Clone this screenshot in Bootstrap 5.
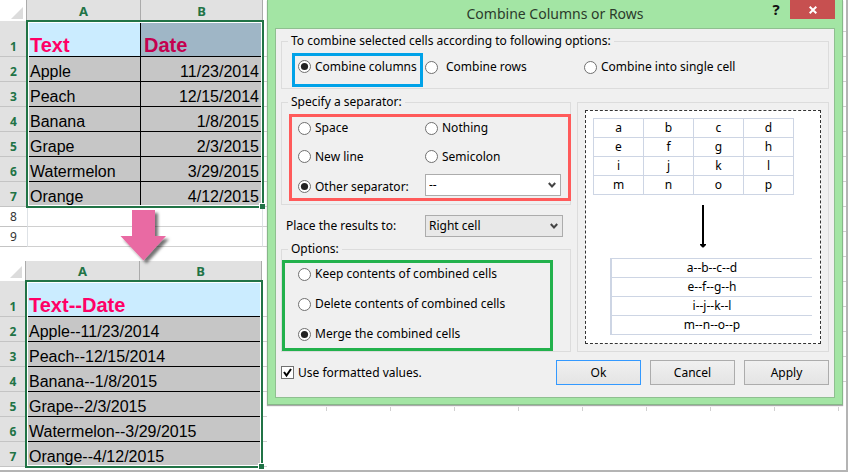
<!DOCTYPE html>
<html lang="en">
<head>
<meta charset="utf-8">
<meta name="viewport" content="width=device-width, initial-scale=1">
<title>Combine Columns or Rows</title>
<link href="https://cdn.jsdelivr.net/npm/bootstrap@5.3.0/dist/css/bootstrap.min.css" rel="stylesheet">
<style>
  :root { --xl-green: #217346; --line: #dcdcdc; }
  body { font-family: "Noto Sans", sans-serif; font-size: 12px; line-height: 16px; color: #000; background: #fff; }
  .workspace { min-height: 100vh; border-right: 2px solid #b4b4b4; border-bottom: 2px solid #b4b4b4; }
  .sheets { flex: 0 0 267px; }

  /* Spreadsheets */
  .sheet-grid { width: 100%; table-layout: fixed; border-collapse: separate; border-spacing: 0; }
  .sheet-grid th, .sheet-grid td { height: 25px; padding: 0 4px 0 3px; border: 0 solid #000; border-width: 0 0 1px; vertical-align: bottom; white-space: nowrap; font: 16px/18px "Liberation Sans", Arial, sans-serif; }
  .sheet-grid tr > th:first-child { background: #e1e1e1; border-color: #c4c4c4; color: var(--xl-green); font: bold 12px/18px "Noto Sans", sans-serif; text-align: center; padding: 0; }
  .sheet-grid thead th, .sheet-grid thead tr > th:first-child { height: 20px; background: #e1e1e1; border-width: 0 1px 0 0; border-color: #ababab; color: var(--xl-green); font: bold 13px/20px "Noto Sans", sans-serif; text-align: center; vertical-align: middle; padding: 0; }
  .sheet-grid thead tr > th:first-child { background: #fff; }
  .sheet-grid thead .edge { background: #fff; border-width: 0; }
  .sheet-grid .filled td { background: #c6c6c6; }
  .sheet-grid td.split { border-right-width: 1px; }
  .sheet-grid .titles td { height: 36px; background: #cbecff; color: #ff0066; font-weight: bold; font-size: 20px; line-height: 22px; }
  .sheet-grid .titles td.dimmed { background: #9fb6c6; color: #c4004f; }
  .sheet-grid tbody td.edge { background: #fff; border-color: #d0d0d0; }
  .sheet-grid .blank td { height: 20px; border-color: #d0d0d0; }
  .sheet-grid .blank > th:first-child { height: 20px; background: #fff; color: #333; font-weight: normal; }
  .first-sheet { padding-bottom: 4px; margin-bottom: 10px; }
  .first-sheet thead th, .first-sheet thead tr > th:first-child { height: 21px; }
  .selection { inset: 20px 3px 43px 26px; border: 2px solid var(--xl-green); box-shadow: inset 0 0 0 1px #fff; pointer-events: none; }
  .second-sheet .selection { inset: 19px 4px -1px 25px; }
  .selection::after { content: ""; position: absolute; right: -3px; bottom: -3px; width: 6px; height: 6px; background: var(--xl-green); border: 1px solid #fff; border-width: 1px 0 0 1px; }
  .flow-arrow { left: 118px; top: 207px; width: 60px; height: 60px; z-index: 2; }

  /* Dialog */
  .backdrop-grid { padding-right: 3px; background: repeating-linear-gradient(#fff 0 24px, #d0d0d0 24px 25px) right 0 top 7px / 3px 396px no-repeat, repeating-linear-gradient(90deg, #fff 0 59px, #d0d0d0 59px 60px, #fff 60px 64px) left 0 top 407px / 100% 4px no-repeat; }
  .dlg { background: #a3e5a4; border: 1px solid #86b788; border-top: 0; padding: 0 7px 6px; box-shadow: 0 1px 1px #aaa; }
  .dlg-title { height: 28px; font-size: 14px; line-height: 27px; color: #2b3b2b; }
  .dlg-tools { top: 0; right: 7px; }
  .help-btn { width: 28px; height: 18px; background: none; font: bold 15px/18px "Noto Sans", sans-serif; color: #111; }
  .close-btn { width: 45px; height: 19px; background: #c75050; }
  .dlg-body { background: #f0f0f0; border: 1px solid #8fbf90; padding: 5px 5px 12px; }
  .group { border: 1px solid var(--line); min-width: 0; }
  .group > legend { float: none; width: auto; margin: 0 0 0 6px; padding: 0 3px; font-size: 12px; line-height: 14px; }
  .choice { display: flex; align-items: center; gap: 4px; white-space: nowrap; }
  .choice .form-check-input { width: 13px; height: 13px; margin: 0; border: 1px solid #707070; background-color: #fff; flex: none; }
  .choice .form-check-input[type=radio]:checked { background-image: url("data:image/svg+xml,%3Csvg xmlns='http://www.w3.org/2000/svg' viewBox='0 0 11 11'%3E%3Ccircle cx='5.5' cy='5.5' r='3.6' fill='%23222'/%3E%3C/svg%3E"); }
  .choice .form-check-input[type=checkbox] { border-radius: 0; }
  .choice .form-check-input[type=checkbox]:checked { background-image: url("data:image/svg+xml,%3Csvg xmlns='http://www.w3.org/2000/svg' viewBox='0 0 11 11'%3E%3Cpath d='M2 5l2.5 3.5L9 2' fill='none' stroke='%23000' stroke-width='2'/%3E%3C/svg%3E"); }
  .top-choices { display: grid; grid-template-columns: 131px 157px auto; column-gap: 2px; padding: 5px 0 1px 10px; }
  .mark-blue { border: 3px solid #00a2e8; height: 34px; padding: 0 3px 7px; }
  .top-choices > .choice { height: 28px; }
  .wide-gap { gap: 8px; }
  .middle { display: grid; grid-template-columns: 290px minmax(0, 1fr); gap: 6px; margin-top: 6px; }
  .mark-red { border: 3px solid #ff5a5a; margin: 5px -1px 3px 7px; padding: 0 7px 0 6px; display: grid; grid-template-columns: 127px minmax(0, 1fr); grid-template-rows: 22px 35px 25px; height: 87px; align-items: center; }
  .mark-green { border: 3px solid #22b14c; margin: 4px 17px 0 0; padding: 0 0 0 13px; height: 91px; display: grid; grid-template-rows: 22px 38px 22px; align-items: center; }
  .drop { height: 22px; border: 1px solid #acacac; border-radius: 0; padding: 0 20px 0 3px; font-size: 12px; line-height: 18px; color: #000; background-color: #fff; background-position: right 4px center; background-size: 8px 8px; background-image: url("data:image/svg+xml,%3Csvg xmlns='http://www.w3.org/2000/svg' viewBox='0 0 8 8'%3E%3Cpath d='M.8 2L4 5.5 7.2 2' fill='none' stroke='%23444' stroke-width='2'/%3E%3C/svg%3E"); }
  .mark-red .drop { align-self: start; }
  .drop-shaded { background-color: #e8e8e8; }
  .place-row { display: grid; grid-template-columns: 139px 138px; padding: 10px 0 5px 5px; align-items: center; }
  .preview-frame { margin-top: 7px; padding: 7px; }
  .preview { background: #fff; border: 1px dashed #333; padding: 7px 8px 8px 7px; height: 100%; }
  .sample { table-layout: fixed; border-collapse: collapse; }
  .sample td { height: 19px; padding: 0 0 1px; border: 1px solid #cdd5e4; text-align: center; line-height: 16px; }
  .before { width: 201px; }
  .joined { width: 202px; margin-left: auto; }
  .joined td { border-right: 0; border-left-width: 2px; }
  .push-btn { width: 85px; height: 25px; border: 1px solid #acacac; border-radius: 0; padding: 0; font-size: 12px; line-height: 20px; color: #000; background: linear-gradient(#f0f0f0, #e4e4e4); }
  .push-btn.main { border-color: #3399ff; }
  .button-row { gap: 9px; }
</style>
<script src="https://cdn.jsdelivr.net/npm/bootstrap@5.3.0/dist/js/bootstrap.bundle.min.js"></script>
</head>
<body>
<main class="workspace d-flex">
  <section class="sheets position-relative">
    <div class="first-sheet position-relative">
      <table class="sheet-grid">
        <colgroup><col style="width:27px"><col style="width:114px"><col><col style="width:4px"></colgroup>
        <thead><tr><th><svg width="24" height="18" class="d-block" aria-hidden="true"><path d="M23 5v12H11z" fill="#dcdcdc"/></svg></th><th>A</th><th>B</th><th class="edge"></th></tr></thead>
        <tbody>
          <tr class="filled titles"><th>1</th><td class="split">Text</td><td class="dimmed">Date</td><td class="edge"></td></tr>
          <tr class="filled"><th>2</th><td class="split">Apple</td><td class="text-end">11/23/2014</td><td class="edge"></td></tr>
          <tr class="filled"><th>3</th><td class="split">Peach</td><td class="text-end">12/15/2014</td><td class="edge"></td></tr>
          <tr class="filled"><th>4</th><td class="split">Banana</td><td class="text-end">1/8/2015</td><td class="edge"></td></tr>
          <tr class="filled"><th>5</th><td class="split">Grape</td><td class="text-end">2/3/2015</td><td class="edge"></td></tr>
          <tr class="filled"><th>6</th><td class="split">Watermelon</td><td class="text-end">3/29/2015</td><td class="edge"></td></tr>
          <tr class="filled"><th>7</th><td class="split">Orange</td><td class="text-end">4/12/2015</td><td class="edge"></td></tr>
          <tr class="blank"><th>8</th><td class="border-start"></td><td class="border-end"></td><td></td></tr>
          <tr class="blank"><th>9</th><td class="border-start"></td><td class="border-end"></td><td></td></tr>
        </tbody>
      </table>
      <div class="selection position-absolute"></div>
    </div>
    <div class="second-sheet position-relative">
      <table class="sheet-grid">
        <colgroup><col style="width:26px"><col style="width:114px"><col><col style="width:5px"></colgroup>
        <thead><tr><th><svg width="24" height="18" class="d-block" aria-hidden="true"><path d="M22 4v12H10z" fill="#dcdcdc"/></svg></th><th>A</th><th>B</th><th class="edge"></th></tr></thead>
        <tbody>
          <tr class="filled titles"><th>1</th><td colspan="2">Text--Date</td><td class="edge"></td></tr>
          <tr class="filled"><th>2</th><td colspan="2">Apple--11/23/2014</td><td class="edge"></td></tr>
          <tr class="filled"><th>3</th><td colspan="2">Peach--12/15/2014</td><td class="edge"></td></tr>
          <tr class="filled"><th>4</th><td colspan="2">Banana--1/8/2015</td><td class="edge"></td></tr>
          <tr class="filled"><th>5</th><td colspan="2">Grape--2/3/2015</td><td class="edge"></td></tr>
          <tr class="filled"><th>6</th><td colspan="2">Watermelon--3/29/2015</td><td class="edge"></td></tr>
          <tr class="filled"><th>7</th><td colspan="2">Orange--4/12/2015</td><td class="edge"></td></tr>
        </tbody>
      </table>
      <div class="selection position-absolute"></div>
    </div>
    <svg class="flow-arrow position-absolute" viewBox="0 0 60 60" aria-hidden="true">
      <defs><filter id="soft" x="-20%" y="-20%" width="150%" height="150%"><feDropShadow dx="3" dy="3" stdDeviation="1.5" flood-color="#000" flood-opacity=".55"/></filter></defs>
      <path d="M14 3h23v26h11L25.500 53.500 2.500 29H14z" fill="#e96aa3" filter="url(#soft)"/>
    </svg>
  </section>

  <section class="backdrop-grid flex-grow-1">
    <form class="dlg position-relative" onsubmit="return false">
      <h1 class="dlg-title text-center fw-normal m-0">Combine Columns or Rows</h1>
      <div class="dlg-tools position-absolute d-flex">
        <button type="button" class="help-btn border-0 p-0" aria-label="Help">?</button>
        <button type="button" class="close-btn border-0 p-0 d-flex align-items-center justify-content-center" aria-label="Close"><svg width="8" height="8" viewBox="0 0 8 8"><path d="M.7.7l6.600 6.600M7.300.7L.7 7.300" stroke="#fff" stroke-width="2"/></svg></button>
      </div>
      <div class="dlg-body">
        <fieldset class="group">
          <legend>To combine selected cells according to following options:</legend>
          <div class="top-choices">
            <div class="mark-blue d-flex align-items-center">
              <label class="choice"><input class="form-check-input" type="radio" name="mode" checked>Combine columns</label>
            </div>
            <label class="choice wide-gap"><input class="form-check-input" type="radio" name="mode">Combine rows</label>
            <label class="choice"><input class="form-check-input" type="radio" name="mode">Combine into single cell</label>
          </div>
        </fieldset>

        <div class="middle">
          <div>
            <fieldset class="group">
              <legend>Specify a separator:</legend>
              <div class="mark-red">
                <label class="choice"><input class="form-check-input" type="radio" name="sep">Space</label>
                <label class="choice"><input class="form-check-input" type="radio" name="sep">Nothing</label>
                <label class="choice"><input class="form-check-input" type="radio" name="sep">New line</label>
                <label class="choice"><input class="form-check-input" type="radio" name="sep">Semicolon</label>
                <label class="choice"><input class="form-check-input" type="radio" name="sep" checked>Other separator:</label>
                <select class="form-select drop" aria-label="Other separator"><option>--</option></select>
              </div>
            </fieldset>
            <div class="place-row">
              <label for="place">Place the results to:</label>
              <select id="place" class="form-select drop drop-shaded"><option>Right cell</option></select>
            </div>
            <fieldset class="group">
              <legend>Options:</legend>
              <div class="mark-green">
                <label class="choice"><input class="form-check-input" type="radio" name="opt">Keep contents of combined cells</label>
                <label class="choice"><input class="form-check-input" type="radio" name="opt">Delete contents of combined cells</label>
                <label class="choice"><input class="form-check-input" type="radio" name="opt" checked>Merge the combined cells</label>
              </div>
            </fieldset>
          </div>
          <div class="group preview-frame">
            <div class="preview">
              <table class="sample before">
                <tr><td>a</td><td>b</td><td>c</td><td>d</td></tr>
                <tr><td>e</td><td>f</td><td>g</td><td>h</td></tr>
                <tr><td>i</td><td>j</td><td>k</td><td>l</td></tr>
                <tr><td>m</td><td>n</td><td>o</td><td>p</td></tr>
              </table>
              <svg class="d-block mx-auto" width="8" height="63" viewBox="0 0 8 63" aria-hidden="true"><path d="M3 10h2v39h2v1L4.500 52.500h-1L1 50v-1h2z"/></svg>
              <table class="sample joined">
                <tr><td>a--b--c--d</td></tr>
                <tr><td>e--f--g--h</td></tr>
                <tr><td>i--j--k--l</td></tr>
                <tr><td>m--n--o--p</td></tr>
              </table>
            </div>
          </div>
        </div>

        <div class="button-row d-flex align-items-center mt-2">
          <label class="choice me-auto"><input class="form-check-input" type="checkbox" checked>Use formatted values.</label>
          <button type="button" class="btn push-btn main">Ok</button>
          <button type="button" class="btn push-btn">Cancel</button>
          <button type="button" class="btn push-btn">Apply</button>
        </div>
      </div>
    </form>
  </section>
</main>
</body>
</html>
